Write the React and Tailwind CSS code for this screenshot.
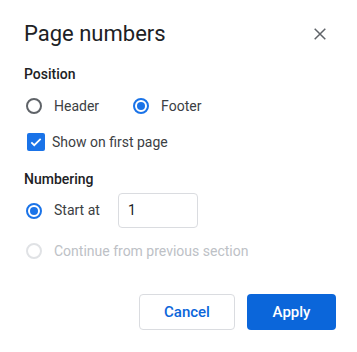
import React from "react";

function Radio({ checked, disabled }) {
  if (checked) {
    return (
      <span className="w-4 h-4 rounded-full border-2 border-[#1a73e8] flex items-center justify-center shrink-0">
        <span className="block w-2 h-2 rounded-full bg-[#1a73e8]" />
      </span>
    );
  }
  return (
    <span
      className={`block w-4 h-4 rounded-full border-2 shrink-0 ${
        disabled ? "border-[#e0e2e5]" : "border-[#5f6368]"
      }`}
    />
  );
}

export default function App() {
  return (
    <div
      className="w-[357px] h-[352px] bg-white text-[#202124] overflow-hidden"
      style={{ fontFamily: "Roboto, 'Liberation Sans', sans-serif" }}
    >
      {/* Header */}
      <div className="flex items-center justify-between pl-6 pr-[31px] pt-[20px]">
        <h2 className="text-[22px] leading-[28px] font-normal">Page numbers</h2>
        <button className="w-3 h-3 flex items-center justify-center">
          <svg width="12" height="12" viewBox="0 0 12 12" fill="none">
            <path d="M0.7 0.7L11.3 11.3M11.3 0.7L0.7 11.3" stroke="#5f6368" strokeWidth="1.5" />
          </svg>
        </button>
      </div>

      <div className="pl-6">
        {/* Position */}
        <div className="mt-[16px] text-[14px] leading-[20px] font-medium">Position</div>
        <div className="mt-[12px] h-[20px] flex items-center text-[14px] text-[#3c4043]">
          <span className="ml-[2px]">
            <Radio />
          </span>
          <span className="ml-3">Header</span>
          <span className="ml-[34px]">
            <Radio checked />
          </span>
          <span className="ml-3">Footer</span>
        </div>
        <div className="mt-[16px] h-[20px] flex items-center text-[14px] text-[#3c4043]">
          <span className="ml-[3px] w-[18px] h-[18px] rounded-[2px] bg-[#1a73e8] flex items-center justify-center">
            <svg width="14" height="14" viewBox="0 0 24 24" fill="none">
              <path d="M4 12.5l5 5L20 6.5" stroke="white" strokeWidth="3" />
            </svg>
          </span>
          <span className="ml-[7px]">Show on first page</span>
        </div>

        {/* Numbering */}
        <div className="mt-[17px] text-[14px] leading-[20px] font-medium">Numbering</div>
        <div className="mt-[4px] flex items-center text-[14px] text-[#3c4043]">
          <span className="ml-[2px]">
            <Radio checked />
          </span>
          <span className="ml-3 w-[64px]">Start at</span>
          <div className="w-[80px] h-[35px] border border-[#dadce0] rounded-[4px] flex items-center pl-[9px] text-[#202124]">
            1
          </div>
        </div>
        <div className="mt-[13px] h-[20px] flex items-center text-[14px] text-[#bdc1c6]">
          <span className="ml-[2px]">
            <Radio disabled />
          </span>
          <span className="ml-3">Continue from previous section</span>
        </div>
      </div>

      {/* Actions */}
      <div className="mt-[33px] flex justify-end gap-3 pr-[21px]">
        <button className="w-[96px] h-[36px] rounded-[4px] border border-[#dadce0] text-[15px] font-medium text-[#0b66da]">
          Cancel
        </button>
        <button className="w-[89px] h-[36px] rounded-[4px] bg-[#0b66da] text-[15px] font-medium text-white">
          Apply
        </button>
      </div>
    </div>
  );
}
